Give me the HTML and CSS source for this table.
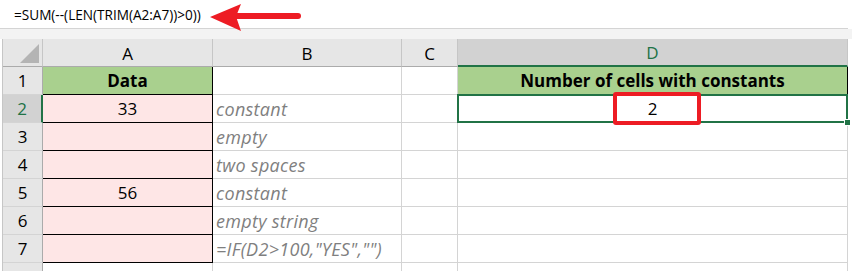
FILE: index.html
```html
<!DOCTYPE html>
<html lang="en">
<head>
    <meta charset="UTF-8" />
    <title>Count cells with constants</title>
    <link rel="stylesheet" href="styles.css">
</head>
<body>
    <div class="formula-bar">
        <span class="formula">=SUM(--(LEN(TRIM(A2:A7))&gt;0))</span>
        <svg class="arrow" width="100" height="34" viewBox="0 0 100 34">
            <line x1="30" y1="16" x2="93" y2="16" stroke="#ed1c24" stroke-width="6" stroke-linecap="round" />
            <path d="M5 17 L36 4 L31 16.5 L36 31 Z" fill="#ed1c24" />
        </svg>
    </div>
    <div class="gap"></div>

    <div class="sheet">
        <!-- column headers -->
        <div class="corner"><span class="tri"></span></div>
        <div class="col-head">A</div>
        <div class="col-head">B</div>
        <div class="col-head">C</div>
        <div class="col-head active">D</div>

        <!-- row 1 -->
        <div class="row-head">1</div>
        <div class="cell data title">Data</div>
        <div class="cell"></div>
        <div class="cell"></div>
        <div class="cell result-title">Number of cells with constants</div>

        <!-- row 2 -->
        <div class="row-head active">2</div>
        <div class="cell data num">33</div>
        <div class="cell note">constant</div>
        <div class="cell"></div>
        <div class="cell result selected">
            <span class="mark"></span>
            <span class="value">2</span>
        </div>

        <!-- row 3 -->
        <div class="row-head">3</div>
        <div class="cell data"></div>
        <div class="cell note">empty</div>
        <div class="cell"></div>
        <div class="cell"></div>

        <!-- row 4 -->
        <div class="row-head">4</div>
        <div class="cell data"></div>
        <div class="cell note">two spaces</div>
        <div class="cell"></div>
        <div class="cell"></div>

        <!-- row 5 -->
        <div class="row-head">5</div>
        <div class="cell data num">56</div>
        <div class="cell note">constant</div>
        <div class="cell"></div>
        <div class="cell"></div>

        <!-- row 6 -->
        <div class="row-head">6</div>
        <div class="cell data"></div>
        <div class="cell note">empty string</div>
        <div class="cell"></div>
        <div class="cell"></div>

        <!-- row 7 -->
        <div class="row-head">7</div>
        <div class="cell data"></div>
        <div class="cell note">=IF(D2&gt;100,"YES","")</div>
        <div class="cell"></div>
        <div class="cell"></div>

        <!-- next row, only its top edge shows -->
        <div class="row-head"></div>
        <div class="cell"></div>
        <div class="cell"></div>
        <div class="cell"></div>
        <div class="cell"></div>
    </div>
</body>
</html>
```

FILE: styles.css
```css
body {
    margin: 0;
    background: #fff;
    font-family: "Open Sans", "Liberation Sans", sans-serif;
    color: #000;
    overflow: hidden;
    height: 271px;
}

.formula-bar {
    position: relative;
    height: 29px;
    border-bottom: 1px solid #d4d4d4;
    width: 848px;
    display: flex;
    align-items: center;
    box-sizing: border-box;
    padding-left: 14px;
    background: #fff;
}

.formula {
    font-size: 13.6px;
    color: #000;
}

.arrow {
    position: absolute;
    left: 205px;
    top: 0;
}

.gap {
    height: 10px;
    background: #f3f3f3;
}

.sheet {
    display: grid;
    grid-template-columns: 40px 170px 189px 56px 390px;
    grid-auto-rows: 28px;
    margin-left: 2px;
    border-left: 1px solid #c6c6c6;
    width: 845px;
}

.corner,
.col-head,
.row-head {
    background: #e6e6e6;
    box-sizing: border-box;
    display: flex;
    align-items: center;
    justify-content: center;
    font-size: 17px;
}

.corner {
    position: relative;
    border-right: 1px solid #c6c6c6;
    border-bottom: 1px solid #ababab;
}

.tri {
    position: absolute;
    right: 3px;
    bottom: 3px;
    width: 0;
    height: 0;
    border-left: 19px solid transparent;
    border-bottom: 19px solid #b4b4b4;
}

.col-head {
    border-right: 1px solid #c6c6c6;
    border-bottom: 1px solid #ababab;
    padding-top: 1px;
}

.col-head.active {
    background: #d2d2d2;
    color: #217346;
    border-bottom: 2px solid #217346;
}

.row-head {
    border-right: 1px solid #ababab;
    border-bottom: 1px solid #d4d4d4;
}

.row-head.active {
    background: #d2d2d2;
    color: #217346;
    border-right: 2px solid #217346;
}

.cell {
    box-sizing: border-box;
    border-right: 1px solid #d4d4d4;
    border-bottom: 1px solid #d4d4d4;
    display: flex;
    align-items: center;
    font-size: 17px;
    white-space: nowrap;
}

.data {
    background: #fee6e6;
    border-right-color: #000;
    border-bottom-color: #000;
    justify-content: center;
}

.title {
    background: #a9d08e;
    font-weight: bold;
}

.note {
    font-style: italic;
    font-size: 18px;
    letter-spacing: 0.3px;
    color: #7f7f7f;
    padding-left: 3px;
}

.result-title {
    background: #a9d08e;
    border-right-color: #000;
    border-bottom-color: #217346;
    font-weight: bold;
    justify-content: center;
}

.result {
    position: relative;
    justify-content: center;
}

/* active cell outline with fill handle */
.selected::after {
    content: "";
    position: absolute;
    left: -1px;
    top: -1px;
    right: -1px;
    bottom: -1px;
    border: 2px solid #217346;
}

.selected::before {
    content: "";
    position: absolute;
    right: -4px;
    bottom: -4px;
    width: 5px;
    height: 5px;
    background: #217346;
    border: 1px solid #fff;
    z-index: 2;
}

.mark {
    position: absolute;
    left: 155px;
    top: -3px;
    width: 88px;
    height: 33px;
    box-sizing: border-box;
    border: 4px solid #ed1c24;
    border-radius: 3px;
    z-index: 1;
}

.value {
    position: relative;
    z-index: 2;
}
```
